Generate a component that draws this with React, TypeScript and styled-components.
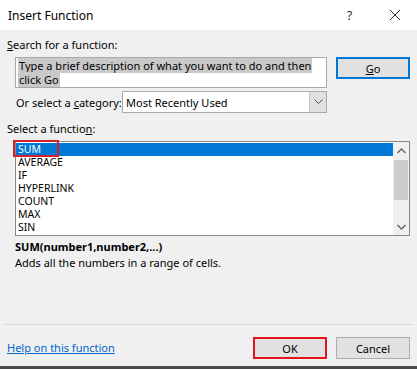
import React from 'react';
import styled, { createGlobalStyle } from 'styled-components';

const GlobalStyle = createGlobalStyle`
    html, body {
        margin: 0;
        padding: 0;
        background: #ffffff;
    }
    body {
        font-family: 'Noto Sans', 'Open Sans', sans-serif;
        font-size: 11px;
        color: #000000;
        white-space: nowrap;
    }
`;

const functions = ['SUM', 'AVERAGE', 'IF', 'HYPERLINK', 'COUNT', 'MAX', 'SIN'];

export default function App() {
    return (
        <Dialog>
            <GlobalStyle />
            <TitleBar>
                <Title>Insert Function</Title>
                <TitleButton>?</TitleButton>
                <TitleButton>
                    <svg width='12' height='12' viewBox='0 0 12 12'>
                        <path d='M1 1 L11 11 M11 1 L1 11' stroke='#222' strokeWidth='1' fill='none' />
                    </svg>
                </TitleButton>
            </TitleBar>
            <Body>
                <Label>
                    <u>S</u>earch for a function:
                </Label>
                <SearchRow>
                    <SearchBox>
                        <Selected>Type a brief description of what you want to do and then</Selected>
                        <br />
                        <Selected>click Go</Selected>
                    </SearchBox>
                    <Button $focused>
                        <u>G</u>o
                    </Button>
                </SearchRow>
                <CategoryRow>
                    <CategoryLabel>
                        Or select a <u>c</u>ategory:
                    </CategoryLabel>
                    <Select>
                        <SelectValue>Most Recently Used</SelectValue>
                        <SelectArrow>
                            <svg width='9' height='6' viewBox='0 0 9 6'>
                                <path d='M0.5 0.5 L4.5 4.5 L8.5 0.5' stroke='#555' strokeWidth='1' fill='none' />
                            </svg>
                        </SelectArrow>
                    </Select>
                </CategoryRow>
                <Label $top={8}>
                    Select a functio<u>n</u>:
                </Label>
                <ListBox>
                    <Items>
                        {functions.map((name, i) => (
                            <Item key={name} $active={i === 0}>
                                {i === 0 ? <Marked>{name}</Marked> : name}
                            </Item>
                        ))}
                    </Items>
                    <ScrollBar>
                        <ScrollArrow>
                            <svg width='9' height='6' viewBox='0 0 9 6'>
                                <path d='M0.5 5 L4.5 1 L8.5 5' stroke='#606060' strokeWidth='1.3' fill='none' />
                            </svg>
                        </ScrollArrow>
                        <Track>
                            <Thumb />
                        </Track>
                        <ScrollArrow>
                            <svg width='9' height='6' viewBox='0 0 9 6'>
                                <path d='M0.5 1 L4.5 5 L8.5 1' stroke='#606060' strokeWidth='1.3' fill='none' />
                            </svg>
                        </ScrollArrow>
                    </ScrollBar>
                </ListBox>
                <Signature>SUM(number1,number2,...)</Signature>
                <Description>Adds all the numbers in a range of cells.</Description>
            </Body>
            <Separator />
            <Footer>
                <HelpLink>Help on this function</HelpLink>
                <Button $marked>OK</Button>
                <Button>Cancel</Button>
            </Footer>
        </Dialog>
    );
}

const Dialog = styled.div`
    width: 417px;
    height: 369px;
    box-sizing: border-box;
    display: flex;
    flex-direction: column;
    background: #f0f0f0;
    border-bottom: 3px solid #4a4a4a;
    overflow: hidden;
`;

const TitleBar = styled.div`
    height: 30px;
    flex-shrink: 0;
    display: flex;
    align-items: center;
    background: #ffffff;
    padding-left: 8px;
`;

const Title = styled.div`
    flex: 1;
    font-size: 12px;
    color: #000;
`;

const TitleButton = styled.div`
    width: 45px;
    height: 30px;
    display: flex;
    align-items: center;
    justify-content: center;
    font-size: 12px;
    color: #222;
`;

const Body = styled.div`
    flex: 1;
    display: flex;
    flex-direction: column;
    padding: 7px 7px 0 7px;
`;

const Label = styled.div<{ $top?: number }>`
    height: 15px;
    line-height: 15px;
    margin-top: ${(p) => p.$top || 0}px;
`;

const SearchRow = styled.div`
    display: flex;
    align-items: flex-start;
    margin-top: 5px;
    padding-left: 8px;
`;

const SearchBox = styled.div`
    width: 312px;
    height: 31px;
    box-sizing: border-box;
    background: #ffffff;
    border: 1px solid #a9a9a9;
    padding: 1px 0 0 2px;
    line-height: 13.5px;
`;

const Selected = styled.span`
    background: #c9c9c9;
    padding: 0 1px;
`;

const Button = styled.div<{ $focused?: boolean; $marked?: boolean }>`
    width: 74px;
    height: 22px;
    box-sizing: border-box;
    margin-left: 9px;
    display: flex;
    align-items: center;
    justify-content: center;
    background: #e1e1e1;
    border: ${(p) => (p.$focused ? '2px solid #0078d7' : p.$marked ? '2px solid #e0141e' : '1px solid #adadad')};
`;

const CategoryRow = styled.div`
    display: flex;
    align-items: center;
    margin-top: 3px;
    padding-left: 9px;
`;

const CategoryLabel = styled.div`
    width: 106px;
`;

const Select = styled.div`
    width: 205px;
    height: 22px;
    box-sizing: border-box;
    display: flex;
    align-items: stretch;
    background: #ffffff;
    border: 1px solid #a9a9a9;
`;

const SelectValue = styled.div`
    flex: 1;
    display: flex;
    align-items: center;
    padding-left: 3px;
`;

const SelectArrow = styled.div`
    width: 16px;
    display: flex;
    align-items: center;
    justify-content: center;
    background: #e1e1e1;
    border-left: 1px solid #c6c6c6;
`;

const ListBox = styled.div`
    margin: 5px 0 0 8px;
    width: 395px;
    height: 95px;
    box-sizing: border-box;
    display: flex;
    background: #ffffff;
    border: 1px solid #828790;
`;

const Items = styled.div`
    flex: 1;
    padding-top: 1px;
`;

const Item = styled.div<{ $active?: boolean }>`
    height: 13px;
    line-height: 13px;
    font-size: 10.5px;
    padding-left: 2px;
    background: ${(p) => (p.$active ? '#0078d7' : 'transparent')};
    color: ${(p) => (p.$active ? '#ffffff' : '#000000')};
`;

const Marked = styled.span`
    position: relative;
    &::after {
        content: '';
        position: absolute;
        left: -5px;
        top: -2px;
        width: 46px;
        height: 17px;
        border: 2px solid #d3202a;
        box-sizing: border-box;
    }
`;

const ScrollBar = styled.div`
    width: 16px;
    display: flex;
    flex-direction: column;
    background: #f0f0f0;
`;

const ScrollArrow = styled.div`
    height: 17px;
    display: flex;
    align-items: center;
    justify-content: center;
`;

const Track = styled.div`
    flex: 1;
    padding-top: 1px;
`;

const Thumb = styled.div`
    margin: 0 1px;
    height: 40px;
    background: #cdcdcd;
`;

const Signature = styled.div`
    margin: 3px 0 0 8px;
    font-weight: bold;
    line-height: 15px;
`;

const Description = styled.div`
    margin: 1px 0 0 8px;
    line-height: 15px;
`;

const Separator = styled.div`
    height: 1px;
    margin: 0 4px;
    background: #dadada;
`;

const Footer = styled.div`
    height: 41px;
    box-sizing: border-box;
    flex-shrink: 0;
    display: flex;
    align-items: flex-start;
    padding: 12px 7px 0 7px;
`;

const HelpLink = styled.div`
    flex: 1;
    align-self: center;
    margin-top: -8px;
    color: #0066cc;
    text-decoration: underline;
`;
